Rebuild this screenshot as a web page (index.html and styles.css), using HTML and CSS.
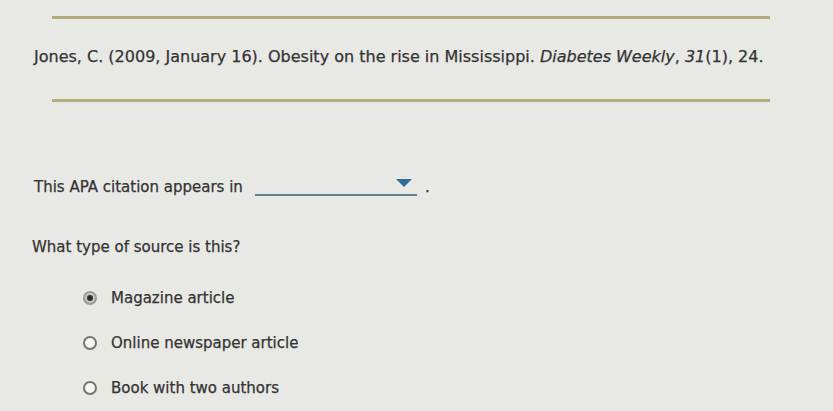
FILE: index.html
```html
<!DOCTYPE html>
<html>
<head>
<meta charset="utf-8">
<link rel="stylesheet" href="styles.css">
</head>
<body>
<div class="page">
  <div class="rule rule-top"></div>
  <p class="citation">Jones, C. (2009, January 16). Obesity on the rise in Mississippi. <i>Diabetes Weekly</i>, <i>31</i>(1), 24.</p>
  <div class="rule rule-bottom"></div>
  <p class="q1">This APA citation appears in
    <span class="select"><svg class="caret" width="16" height="8" viewBox="0 0 16 8"><path d="M0 0H16L8 8Z" fill="#2f6c98"/></svg></span><span class="dot">.</span>
  </p>
  <p class="q2">What type of source is this?</p>
  <ul class="options">
    <li><span class="radio checked"></span>Magazine article</li>
    <li><span class="radio"></span>Online newspaper article</li>
    <li><span class="radio"></span>Book with two authors</li>
  </ul>
</div>
</body>
</html>
```
FILE: styles.css
```css
html, body {
  margin: 0;
  padding: 0;
  background: #e8e8e5;
}
.page {
  width: 833px;
  height: 411px;
  overflow: hidden;
  padding-top: 16px;
  box-sizing: border-box;
  font-family: "DejaVu Sans", Verdana, sans-serif;
  font-size: 15px;
  color: #333333;
  -webkit-text-stroke: 0.25px #333333;
}
.rule {
  margin-left: 52px;
  width: 718px;
  height: 3px;
  background: #b4aa7c;
}
.citation {
  margin: 28px 0 0 34px;
  font-size: 16px;
  line-height: 20px;
  white-space: nowrap;
}
.rule-bottom {
  margin-top: 32px;
}
.q1 {
  margin: 75px 0 0 34px;
  line-height: 20px;
  display: flex;
  align-items: center;
}
.select {
  display: inline-flex;
  justify-content: flex-end;
  align-items: flex-start;
  width: 162px;
  height: 18px;
  margin-left: 12px;
  border-bottom: 2px solid #5d7e93;
  box-sizing: border-box;
  padding-right: 5px;
}
.caret { display: block; margin-top: 1px; }
.dot { margin-left: 8px; }
.q2 {
  margin: 40px 0 0 32px;
  line-height: 20px;
}
.options {
  list-style: none;
  margin: 31px 0 0 0;
  padding: 0 0 0 83px;
}
.options li {
  display: flex;
  align-items: center;
  height: 20px;
  margin-bottom: 25px;
}
.radio {
  width: 14px;
  height: 14px;
  box-sizing: border-box;
  border: 2px solid #747474;
  border-radius: 50%;
  background: #f6f6f4;
  margin-right: 14px;
  position: relative;
  flex: none;
}
.radio.checked {
  border-color: #9a9a9a;
  background: #c8c8c8;
}
.radio.checked::after {
  content: "";
  position: absolute;
  left: 2px;
  top: 2px;
  width: 6px;
  height: 6px;
  border-radius: 50%;
  background: #2e2e2e;
}
```
